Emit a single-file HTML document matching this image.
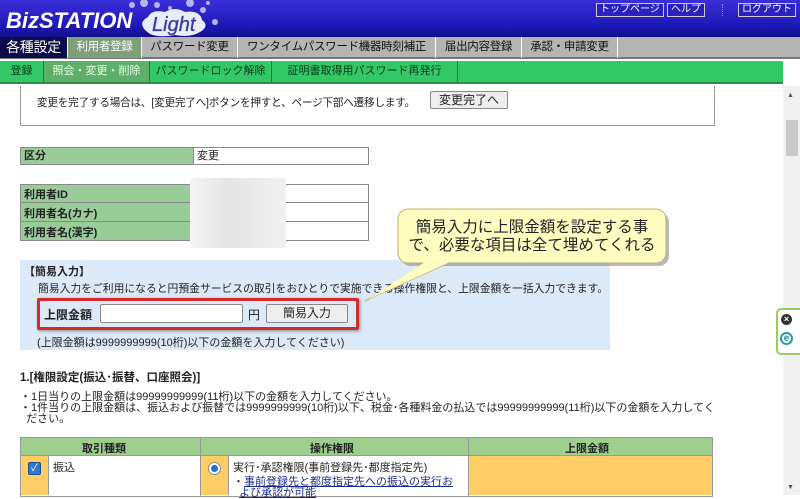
<!DOCTYPE html>
<html><head><meta charset="utf-8"><style>
*{margin:0;padding:0;box-sizing:border-box}
body{width:800px;height:495px;overflow:hidden;background:#fff;font-family:"Liberation Sans","Noto Sans CJK JP",sans-serif;font-size:11px;color:#222;position:relative}
.a{position:absolute}
.hdr{left:0;top:0;width:800px;height:37px;background:linear-gradient(#3a2fd8,#1f18b8 70%,#14108a)}
.tl{top:3px;height:14px;border:1px solid #ccc;color:#fff;font-size:10px;line-height:12px;padding:0 3px;background:#2a22c0}
.tabs{left:0;top:37px;width:800px;height:22px;background:#b4b4b4;border-bottom:2px solid #777}
.tab{top:0;height:21px;line-height:21px;font-size:11.5px;text-align:center;border-right:1px solid #fff;color:#111;white-space:nowrap;letter-spacing:-0.3px}
.sub{left:0;top:61px;width:783px;height:23px;background:#33c866;border-bottom:2px solid #2a8f48}
.st{top:0;height:21px;line-height:21px;font-size:11px;text-align:center;border-right:1px solid #1e7a3a;color:#0a3a1a;white-space:nowrap}
.g{background:#99cc99;border:1px solid #888}
</style></head><body>
<div class="a hdr"></div>
<svg class="a" style="left:0;top:0" width="230" height="37">
<g fill="#c8cff5" opacity=".85"><circle cx="132" cy="5" r="3"/><circle cx="144" cy="3" r="4"/><circle cx="157" cy="5" r="3"/><circle cx="170" cy="8" r="2"/><circle cx="190" cy="3" r="4"/><circle cx="203" cy="10" r="3"/><circle cx="215" cy="22" r="3"/><circle cx="208" cy="3" r="2"/></g>
<path d="M145 30 Q138 22 148 17 Q152 9 165 12 Q175 6 185 12 Q200 10 202 20 Q210 26 200 32 Q190 38 175 35 Q160 38 150 34 Z" fill="#e8ecfb"/>
<text x="6" y="28" font-family="Liberation Sans" font-weight="bold" font-style="italic" font-size="22" fill="#fff">BizSTATION</text>
<text x="152" y="31" font-family="Liberation Sans" font-style="italic" font-size="20" fill="#3a3a9a" stroke="#3a3a9a" stroke-width=".3">Light</text>
</svg>
<div class="a tl" style="left:596px">トップページ</div>
<div class="a tl" style="left:667px">ヘルプ</div>
<div class="a" style="left:722px;top:4px;width:1px;height:12px;border-left:1px dotted #99a"></div>
<div class="a tl" style="left:738px">ログアウト</div>
<div class="a tabs">
<div class="a tab" style="left:0;width:68px;background:#0c0c4a;color:#fff;font-size:14px">各種設定</div>
<div class="a tab" style="left:68px;width:74px;background:#7f9f7a;color:#fff">利用者登録</div>
<div class="a tab" style="left:142px;width:96px">パスワード変更</div>
<div class="a tab" style="left:238px;width:198px">ワンタイムパスワード機器時刻補正</div>
<div class="a tab" style="left:436px;width:86px">届出内容登録</div>
<div class="a tab" style="left:522px;width:96px">承認・申請変更</div>
</div>
<div class="a sub">
<div class="a st" style="left:0;width:44px">登録</div>
<div class="a st" style="left:44px;width:106px;background:#5fae6a;color:#e8ffe8">照会・変更・削除</div>
<div class="a st" style="left:150px;width:122px">パスワードロック解除</div>
<div class="a st" style="left:272px;width:186px">証明書取得用パスワード再発行</div>
</div>
<div class="a" style="left:783px;top:86px;width:17px;height:409px;background:#f0f0f0"></div>
<div class="a" style="left:786px;top:120px;width:12px;height:36px;background:#c8c8c8"></div>
<div class="a" style="left:787px;top:92px;font-size:7px;color:#555">▲</div>
<div class="a" style="left:787px;top:484px;font-size:7px;color:#555">▼</div>
<div class="a" style="left:20px;top:86px;width:695px;height:40px;border:1px solid #999;border-top:none"></div>
<div class="a" style="left:37px;top:95px;font-size:10.6px;letter-spacing:-0.2px">変更を完了する場合は、[変更完了へ]ボタンを押すと、ページ下部へ遷移します。</div>
<div class="a" style="left:430px;top:91px;width:78px;height:18px;border:1px solid #888;background:#eee;font-size:12px;text-align:center;line-height:16px;border-radius:2px">変更完了へ</div>
<div class="a g" style="left:20px;top:147px;width:174px;height:18px;font-weight:bold;padding-left:3px;line-height:16px">区分</div>
<div class="a" style="left:193px;top:147px;width:176px;height:18px;border:1px solid #888;padding-left:3px;line-height:16px">変更</div>
<div class="a g" style="left:20px;top:184px;width:174px;height:57px"></div>
<div class="a" style="left:20px;top:202px;width:174px;border-top:1px solid #888"></div>
<div class="a" style="left:20px;top:221px;width:174px;border-top:1px solid #888"></div>
<div class="a" style="left:24px;top:186px;font-weight:bold;line-height:19px">利用者ID<br>利用者名(カナ)<br>利用者名(漢字)</div>
<div class="a" style="left:193px;top:184px;width:176px;height:57px;border:1px solid #888"></div>
<div class="a" style="left:193px;top:202px;width:176px;border-top:1px solid #888"></div>
<div class="a" style="left:193px;top:221px;width:176px;border-top:1px solid #888"></div>
<div class="a" style="left:190px;top:178px;width:96px;height:70px;background:linear-gradient(90deg,#f4f4f4,#e4e4e4 40%,#f0f0f0)"></div>
<div class="a" style="left:20px;top:260px;width:590px;height:90px;background:#dbe9f8"></div>
<div class="a" style="left:24px;top:263px;font-weight:bold">【簡易入力】</div>
<div class="a" style="left:38px;top:280px;font-size:10.8px">簡易入力をご利用になると円預金サービスの取引をおひとりで実施できる操作権限と、上限金額を一括入力できます。</div>
<div class="a" style="left:37px;top:298px;width:322px;height:32px;border:3px solid #d42a2a;border-radius:2px;box-shadow:1px 1px 3px #888"></div>
<div class="a" style="left:44px;top:306px;font-weight:bold;font-size:12px">上限金額</div>
<div class="a" style="left:100px;top:304px;width:143px;height:19px;border:1px solid #888;background:#fff;border-radius:2px"></div>
<div class="a" style="left:248px;top:306px;font-size:12px">円</div>
<div class="a" style="left:266px;top:304px;width:82px;height:19px;border:1px solid #888;background:#eee;text-align:center;line-height:17px;font-size:12px;border-radius:2px">簡易入力</div>
<div class="a" style="left:37px;top:334px">(上限金額は9999999999(10桁)以下の金額を入力してください)</div>
<svg class="a" style="left:355px;top:205px" width="320" height="110">
<rect x="43" y="4" width="268" height="54" rx="10" fill="#777" opacity=".5" transform="translate(3,3)"/>
<path d="M100 55 L10 96 L75 58 Z" fill="#fffcc0" stroke="#b8b070"/>
<rect x="43" y="4" width="268" height="54" rx="10" fill="#fffcc0" stroke="#b8b070"/>
<path d="M70 57 L12 95 L95 57 Z" fill="#fffcc0"/>
<text x="177" y="27" text-anchor="middle" font-family="Liberation Sans,Noto Sans CJK JP,sans-serif" font-size="15.5" fill="#222">簡易入力に上限金額を設定する事</text>
<text x="177" y="45" text-anchor="middle" font-family="Liberation Sans,Noto Sans CJK JP,sans-serif" font-size="15.5" fill="#222">で、必要な項目は全て埋めてくれる</text>
</svg>
<div class="a" style="left:20px;top:369px;font-weight:bold;font-size:11.5px">1.[権限設定(振込･振替、口座照会)]</div>
<div class="a" style="left:20px;top:392px;line-height:11px;width:700px">・1日当りの上限金額は99999999999(11桁)以下の金額を入力してください。<br>・1件当りの上限金額は、振込および振替では9999999999(10桁)以下、税金･各種料金の払込では99999999999(11桁)以下の金額を入力してく<br>&nbsp;&nbsp;ださい。</div>
<div class="a" style="left:20px;top:437px;width:693px;height:60px;border:1px solid #999"></div>
<div class="a" style="left:20px;top:437px;width:693px;height:19px;background:#9fcf8f;border:1px solid #999"></div>
<div class="a" style="left:200px;top:437px;height:60px;border-left:1px solid #999"></div>
<div class="a" style="left:468px;top:437px;height:60px;border-left:1px solid #999"></div>
<div class="a" style="left:82px;top:440px;font-weight:bold">取引種類</div>
<div class="a" style="left:310px;top:440px;font-weight:bold">操作権限</div>
<div class="a" style="left:565px;top:440px;font-weight:bold">上限金額</div>
<div class="a" style="left:21px;top:456px;width:28px;height:39px;background:#ffcc66;border-right:1px solid #999"></div>
<div class="a" style="left:201px;top:456px;width:28px;height:39px;background:#ffcc66;border-right:1px solid #999"></div>
<div class="a" style="left:469px;top:456px;width:243px;height:39px;background:#ffcc66"></div>
<div class="a" style="left:28px;top:462px;width:13px;height:13px;background:#2a78d0;border:1px solid #1a5090;border-radius:2px;color:#fff;font-size:10px;line-height:11px;text-align:center">✓</div>
<div class="a" style="left:53px;top:459px">振込</div>
<div class="a" style="left:208px;top:462px;width:13px;height:13px;border:1px solid #888;border-radius:50%;background:#fff"></div>
<div class="a" style="left:211px;top:465px;width:7px;height:7px;border-radius:50%;background:#1e6fd8"></div>
<div class="a" style="left:233px;top:459px">実行･承認権限(事前登録先･都度指定先)</div>
<div class="a" style="left:233px;top:477px;color:#1a2a8a;line-height:11px">・<u>事前登録先と都度指定先への振込の実行お</u><br>&nbsp;&nbsp;<u>よび承認が可能</u></div>
<div class="a" style="left:776px;top:308px;width:30px;height:47px;border:2px solid #9c6;border-radius:5px;background:#fff"></div>
<div class="a" style="left:781px;top:314px;width:11px;height:11px;border-radius:50%;background:#333;color:#fff;font-size:9px;line-height:11px;text-align:center;font-weight:bold">×</div>
<div class="a" style="left:780px;top:332px;width:13px;height:13px;border-radius:50%;border:2px solid #2a9a9a;color:#2a8a8a;font-size:10px;line-height:9px;text-align:center;font-weight:bold">e</div>
</body></html>
